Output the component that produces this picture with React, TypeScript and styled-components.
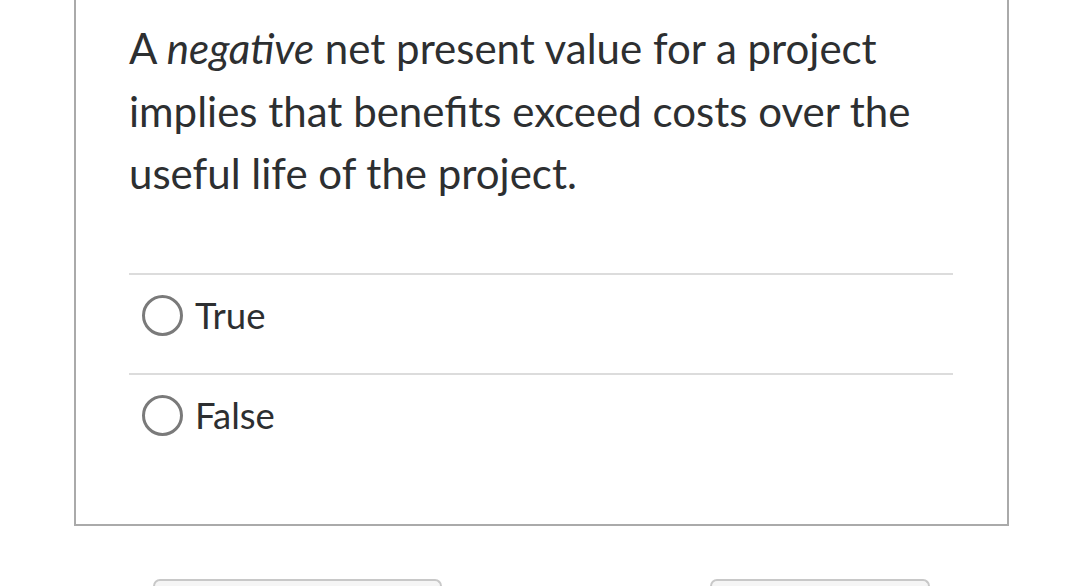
import React from "react";
import styled, { createGlobalStyle } from "styled-components";

const Global = createGlobalStyle`
  html, body { margin: 0; padding: 0; background: #fff; overflow: hidden; }
  body { width: 1080px; height: 586px; font-family: Lato, "Open Sans", sans-serif; color: #2d2f31; }
`;

const Page = styled.div`
  display: flex;
  flex-direction: column;
  padding-left: 74px;
  width: 1080px;
  height: 586px;
  box-sizing: border-box;
  overflow: hidden;
`;

const Card = styled.div`
  flex: none;
  width: 935px;
  box-sizing: border-box;
  border: 2px solid #aaaaaa;
  border-top: none;
  padding: 17px 54px 0 53px;
  height: 526px;
  display: flex;
  flex-direction: column;
`;

const Question = styled.div`
  font-size: 42px;
  line-height: 62.5px;
  color: #2d2f31;
  em { font-style: italic; }
`;

const Answers = styled.div`
  margin-top: 68px;
  display: flex;
  flex-direction: column;
`;

const AnswerRow = styled.label`
  display: flex;
  align-items: center;
  gap: 12px;
  height: 100px;
  box-sizing: border-box;
  border-top: 2px solid #dcdcdc;
  padding: 0 0 0 13px;
  font-size: 36.5px;
  line-height: 41px;
  color: #2d2f31;
  & > * { margin-top: -17px; }
`;

const Radio = styled.span`
  width: 41px;
  height: 41px;
  box-sizing: border-box;
  border: 3px solid #7a7a7a;
  border-radius: 50%;
  flex: none;
`;

const Buttons = styled.div`
  flex: none;
  display: flex;
  margin-top: 53px;
  padding-left: 79px;
`;

const NavButton = styled.div<{ $w: number; $gap?: number }>`
  width: ${(p) => p.$w}px;
  margin-left: ${(p) => p.$gap ?? 0}px;
  height: 7px;
  box-sizing: border-box;
  border: 2px solid #c8c8c8;
  border-bottom: none;
  border-radius: 8px 8px 0 0;
  background: #f5f5f5;
`;

export default function App() {
  return (
    <>
      <Global />
      <Page>
        <Card>
          <Question>
            A <em>negative</em> net present value for a project implies that
            benefits exceed costs over the useful life of the project.
          </Question>
          <Answers>
            <AnswerRow>
              <Radio />
              <span>True</span>
            </AnswerRow>
            <AnswerRow>
              <Radio />
              <span>False</span>
            </AnswerRow>
          </Answers>
        </Card>
        <Buttons>
          <NavButton $w={289} />
          <NavButton $w={220} $gap={268} />
        </Buttons>
      </Page>
    </>
  );
}
